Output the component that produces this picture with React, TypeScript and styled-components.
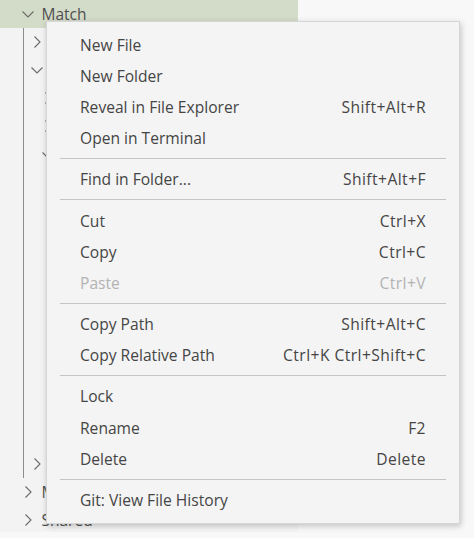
import React from "react";
import styled, { createGlobalStyle } from "styled-components";

const Global = createGlobalStyle`
  html, body { margin: 0; padding: 0; background: #f8f8f8; }
  body { font-family: "Open Sans", "Noto Sans", sans-serif; }
`;

const Page = styled.div`
  position: relative;
  width: 474px;
  height: 538px;
  overflow: hidden;
  display: flex;
  background: #f8f8f8;
`;

const Sidebar = styled.div`
  width: 298px;
  height: 532px;
  background: #f3f3f3;
  display: flex;
  flex-direction: column;
  overflow: hidden;
`;

const Row = styled.div<{ $pad: number; $active?: boolean }>`
  height: 28.1px;
  flex: none;
  display: flex;
  align-items: center;
  gap: 6px;
  padding-left: ${(p) => p.$pad}px;
  background: ${(p) => (p.$active ? "#d3dbc9" : "transparent")};
  color: #505050;
  font-size: 15.5px;
  white-space: nowrap;
`;

const Children = styled.div`
  margin-left: 23px;
  border-left: 1px solid #8c8c8c;
  display: flex;
  flex-direction: column;
`;

const ChevronBox = styled.svg`
  width: 16px;
  height: 16px;
  flex: none;
  stroke: #6a6a6a;
  stroke-width: 1.1;
  fill: none;
`;

const Chevron = ({ open }: { open?: boolean }) => (
  <ChevronBox viewBox="0 0 16 16">
    {open ? <path d="M2.5 5.5 L8 11 L13.5 5.5" /> : <path d="M5.5 2.5 L11 8 L5.5 13.5" />}
  </ChevronBox>
);

const Menu = styled.div`
  position: absolute;
  left: 46px;
  top: 21px;
  width: 414px;
  box-sizing: border-box;
  background: #f4f4f4;
  border: 1px solid #d6d6d6;
  box-shadow: 1px 2px 6px rgba(0, 0, 0, 0.22);
  padding: 7px 0;
  display: flex;
  flex-direction: column;
`;

const Item = styled.div<{ $disabled?: boolean }>`
  height: 31.2px;
  display: flex;
  align-items: center;
  justify-content: space-between;
  padding: 0 33px 0 33px;
  font-size: 15.6px;
  color: ${(p) => (p.$disabled ? "#b3b3b3" : "#454545")};
  white-space: nowrap;
`;

const Keys = styled.span`
  color: inherit;
  letter-spacing: 0.45px;
`;

const Separator = styled.div`
  height: 10px;
  display: flex;
  align-items: center;
  padding: 0 13px;
  &::after {
    content: "";
    flex: 1;
    height: 1px;
    background: #c4c4c4;
  }
`;

type Entry = { label: string; keys?: string; disabled?: boolean } | "sep";

const entries: Entry[] = [
  { label: "New File" },
  { label: "New Folder" },
  { label: "Reveal in File Explorer", keys: "Shift+Alt+R" },
  { label: "Open in Terminal" },
  "sep",
  { label: "Find in Folder...", keys: "Shift+Alt+F" },
  "sep",
  { label: "Cut", keys: "Ctrl+X" },
  { label: "Copy", keys: "Ctrl+C" },
  { label: "Paste", keys: "Ctrl+V", disabled: true },
  "sep",
  { label: "Copy Path", keys: "Shift+Alt+C" },
  { label: "Copy Relative Path", keys: "Ctrl+K Ctrl+Shift+C" },
  "sep",
  { label: "Lock" },
  { label: "Rename", keys: "F2" },
  { label: "Delete", keys: "Delete" },
  "sep",
  { label: "Git: View File History" },
];

type Node = { indent: number; open?: boolean };
const hiddenRows: Node[] = [
  { indent: 16 },
  { indent: 16 },
  { indent: 16, open: true },
  { indent: 27 },
  { indent: 27 },
  { indent: 27 },
  { indent: 27 },
  { indent: 27 },
  { indent: 27 },
  { indent: 27 },
  { indent: 27 },
  { indent: 27 },
  { indent: 27 },
];

export default function App() {
  return (
    <>
      <Global />
      <Page>
        <Sidebar>
          <Row $pad={19.5} $active>
            <Chevron open />
            <span>Match</span>
          </Row>
          <Children>
            <Row $pad={5}>
              <Chevron />
            </Row>
            <Row $pad={5}>
              <Chevron open />
            </Row>
            {hiddenRows.map((n, i) => (
              <Row key={i} $pad={n.indent}>
                <Chevron open={n.open} />
              </Row>
            ))}
            <Row $pad={5}>
              <Chevron />
            </Row>
          </Children>
          <Row $pad={19.5}>
            <Chevron />
            <span>Models</span>
          </Row>
          <Row $pad={19.5}>
            <Chevron />
            <span>Shared</span>
          </Row>
        </Sidebar>
        <Menu>
          {entries.map((e, i) =>
            e === "sep" ? (
              <Separator key={i} />
            ) : (
              <Item key={i} $disabled={e.disabled}>
                <span>{e.label}</span>
                {e.keys && <Keys>{e.keys}</Keys>}
              </Item>
            )
          )}
        </Menu>
      </Page>
    </>
  );
}
